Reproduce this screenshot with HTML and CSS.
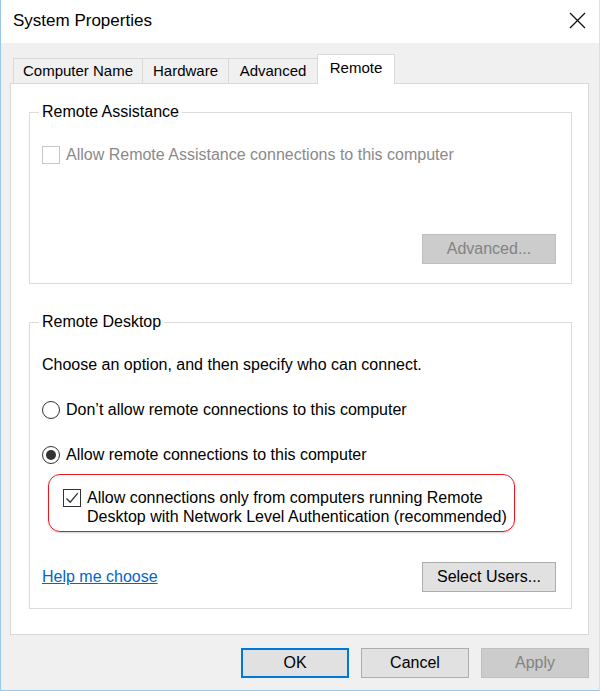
FILE: index.html
```html
<!DOCTYPE html>
<html>
<head>
<meta charset="utf-8">
<title>System Properties</title>
<link rel="stylesheet" href="styles.css">
</head>
<body>
<div class="window">
  <div class="titlebar">
    <span class="title">System Properties</span>
    <svg class="close" width="17" height="17" viewBox="0 0 17 17">
      <path d="M1 1 L16 16 M16 1 L1 16" stroke="#111" stroke-width="1.3" fill="none"/>
    </svg>
  </div>
  <div class="client">
    <div class="tabs">
      <div class="tab t-cn">Computer Name</div>
      <div class="tab t-hw">Hardware</div>
      <div class="tab t-adv">Advanced</div>
      <div class="tab tab-active t-rem">Remote</div>
    </div>
    <div class="panel">
      <fieldset class="group group-ra">
        <legend>Remote Assistance</legend>
        <div class="row row-first disabled"><span class="cb cb-disabled"></span>Allow Remote Assistance connections to this computer</div>
        <div class="btn-line ra-btns"><button class="btn btn-disabled wide">Advanced...</button></div>
      </fieldset>
      <fieldset class="group group-rd">
        <legend>Remote Desktop</legend>
        <div class="row row-first">Choose an option, and then specify who can connect.</div>
        <div class="row row-radio"><span class="radio"></span>Don’t allow remote connections to this computer</div>
        <div class="row row-radio"><span class="radio radio-on"><span class="dot"></span></span>Allow remote connections to this computer</div>
        <div class="highlight">
          <span class="cb cb-checked">
            <svg width="16" height="16" viewBox="0 0 16 16"><path d="M2.5 8.5 L6.2 12.2 L13.8 3.2" stroke="#333" stroke-width="1.3" fill="none"/></svg>
          </span>
          <div class="nla-text">Allow connections only from computers running Remote<br>Desktop with Network Level Authentication (recommended)</div>
        </div>
        <div class="rd-bottom">
          <a class="link" href="#">Help me choose</a>
          <button class="btn wide">Select Users...</button>
        </div>
      </fieldset>
    </div>
    <div class="dialog-buttons">
      <button class="btn dlg btn-default">OK</button>
      <button class="btn dlg">Cancel</button>
      <button class="btn dlg btn-disabled">Apply</button>
    </div>
  </div>
</div>
</body>
</html>
```

FILE: styles.css
```css
html, body {
  margin: 0;
  padding: 0;
  background: #ffffff;
}
body {
  font-family: "Liberation Sans", Arial, sans-serif;
  font-size: 16px;
  line-height: 20px;
  color: #000;
}
.window {
  width: 600px;
  height: 691px;
  box-sizing: border-box;
  border-left: 1px solid #99c8ef;
  border-right: 1px solid #cfe3f6;
  border-bottom: 1px solid #99c8ef;
  background: #f0f0f0;
  display: flex;
  flex-direction: column;
}
.titlebar {
  height: 43px;
  background: #ffffff;
  display: flex;
  align-items: center;
  justify-content: space-between;
  padding: 0 13px 1px 12px;
  box-sizing: border-box;
}
.title {
  font-size: 17px;
  color: #000;
}
.close {
  display: block;
  margin-bottom: 2px;
}
.client {
  padding: 11px 10px 0 9px;
  display: flex;
  flex-direction: column;
}
.tabs {
  display: flex;
  align-items: flex-end;
  height: 29px;
  margin-left: 3px;
}
.tab {
  box-sizing: border-box;
  height: 25px;
  border: 1px solid #d9d9d9;
  border-bottom: none;
  background: #f0f0f0;
  text-align: center;
  font-size: 15px;
  line-height: 24px;
  white-space: nowrap;
}
.t-cn { width: 130px; }
.t-hw { width: 87px; margin-left: -1px; }
.t-adv { width: 90px; margin-left: -1px; }
.t-rem { width: 78px; margin-left: -1px; }
.tab-active {
  height: 30px;
  background: #ffffff;
  line-height: 20px;
  padding-top: 3px;
  margin-bottom: -1px;
  position: relative;
  z-index: 1;
}
.panel {
  background: #ffffff;
  border: 1px solid #d9d9d9;
  padding: 0 16px 25px 18px;
}
.group {
  margin: 0;
  border: 1px solid #dcdcdc;
  padding: 0 15px 19px 12px;
  min-width: 0;
}
.group legend {
  padding: 0 3px;
  margin-left: -3px;
  line-height: 20px;
}
.group-ra { margin-top: 18px; }
.group-rd { margin-top: 28px; padding-bottom: 16px; }
.row {
  display: flex;
  align-items: center;
  height: 20px;
  white-space: nowrap;
}
.row-first { margin-top: 23px; }
.row-radio { margin-top: 25px; }
.disabled { color: #8a8a8a; }
.cb {
  box-sizing: border-box;
  width: 18px;
  height: 18px;
  border: 1px solid #333;
  background: #fff;
  flex: none;
  display: flex;
  align-items: center;
  justify-content: center;
}
.cb-disabled {
  border-color: #c6c6c6;
  margin-right: 6px;
}
.radio {
  box-sizing: border-box;
  width: 18px;
  height: 18px;
  border: 1px solid #333;
  border-radius: 50%;
  margin-right: 6px;
  flex: none;
  display: flex;
  align-items: center;
  justify-content: center;
}
.dot {
  width: 10px;
  height: 10px;
  border-radius: 50%;
  background: #333;
}
.btn-line {
  display: flex;
  justify-content: flex-end;
}
.ra-btns { margin-top: 69px; }
.btn {
  box-sizing: border-box;
  height: 30px;
  padding: 0;
  font-family: "Liberation Sans", Arial, sans-serif;
  font-size: 16px;
  color: #000;
  background: #e1e1e1;
  border: 1px solid #adadad;
}
.wide { width: 134px; }
.btn-disabled {
  background: #cccccc;
  border-color: #bfbfbf;
  color: #838383;
}
.highlight {
  box-sizing: border-box;
  margin-top: 9px;
  margin-left: 6px;
  width: 467px;
  height: 58px;
  border: 1.5px solid #e5191d;
  border-radius: 12px;
  box-shadow: 0 1px 2px rgba(0, 0, 0, 0.18);
  padding: 13px 0 0 14px;
  display: flex;
  align-items: flex-start;
}
.cb-checked {
  margin-top: 1px;
  margin-right: 6px;
}
.cb-checked svg { display: block; }
.nla-text {
  line-height: 19px;
  white-space: nowrap;
}
.rd-bottom {
  margin-top: 30px;
  display: flex;
  justify-content: space-between;
  align-items: center;
}
.link {
  color: #0066cc;
  text-decoration: underline;
}
.dialog-buttons {
  margin-top: 13px;
  display: flex;
  justify-content: flex-end;
  gap: 12px;
}
.dlg { width: 108px; }
.btn-default {
  border: 2px solid #0078d7;
}
```
